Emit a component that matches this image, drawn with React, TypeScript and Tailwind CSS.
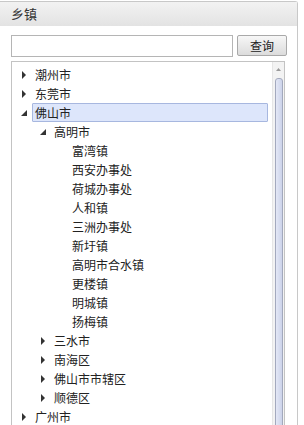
import React from 'react';

interface Node {
  label: string;
  level: number;
  state?: 'open' | 'closed';
  selected?: boolean;
}

const nodes: Node[] = [
  { label: '潮州市', level: 0, state: 'closed' },
  { label: '东莞市', level: 0, state: 'closed' },
  { label: '佛山市', level: 0, state: 'open', selected: true },
  { label: '高明市', level: 1, state: 'open' },
  { label: '富湾镇', level: 2 },
  { label: '西安办事处', level: 2 },
  { label: '荷城办事处', level: 2 },
  { label: '人和镇', level: 2 },
  { label: '三洲办事处', level: 2 },
  { label: '新圩镇', level: 2 },
  { label: '高明市合水镇', level: 2 },
  { label: '更楼镇', level: 2 },
  { label: '明城镇', level: 2 },
  { label: '扬梅镇', level: 2 },
  { label: '三水市', level: 1, state: 'closed' },
  { label: '南海区', level: 1, state: 'closed' },
  { label: '佛山市市辖区', level: 1, state: 'closed' },
  { label: '顺德区', level: 1, state: 'closed' },
  { label: '广州市', level: 0, state: 'closed' },
];

const indent = ['pl-[6px]', 'pl-[25px]', 'pl-[43px]'];

const Arrow: React.FC<{ state?: 'open' | 'closed' }> = ({ state }) => {
  if (state === 'closed')
    return (
      <svg width="5" height="8" viewBox="0 0 5 8" className="ml-[4px]">
        <path d="M0 0 L4 4 L0 8 Z" fill="#333" />
      </svg>
    );
  if (state === 'open')
    return (
      <svg width="6" height="6" viewBox="0 0 6 6" className="ml-[3px]">
        <path d="M6 0 L6 6 L0 6 Z" fill="#333" />
      </svg>
    );
  return null;
};

const App: React.FC = () => {
  return (
    <div className="w-[304px] h-[425px] overflow-hidden bg-white font-['Noto_Sans_CJK_SC',sans-serif] text-[12px] text-[#222]">
      <div className="w-[298px] h-[440px] border-r border-t border-[#c8c8c8] rounded-tr-[3px] mt-[1px]">
        <div className="h-[24px] bg-gradient-to-b from-[#f2f2f2] to-[#e3e3e3] flex items-center pl-[11px] text-[13px] text-[#333]">
          乡镇
        </div>

        <div className="pl-[11px] pr-[10px] pt-[9px]">
          <div className="flex gap-[4px] h-[22px]">
            <input className="w-[222px] h-[22px] border border-[#b5b5b5] bg-white outline-none px-1" />
            <button className="w-[50px] h-[21px] border border-[#a9a9a9] rounded-[2px] bg-gradient-to-b from-[#f7f7f7] to-[#dcdcdc] text-[12px] text-[#222] flex items-center justify-center">
              查询
            </button>
          </div>

          <div className="mt-[4px] w-[274px] h-[380px] border border-[#c3c3c3] flex">
            <div className="flex-1 pt-[3px]">
              {nodes.map((n) => (
                <div key={n.label} className={`h-[19px] flex items-center ${indent[n.level]}`}>
                  <div className="w-[14px] flex items-center">
                    <Arrow state={n.state} />
                  </div>
                  <div
                    className={`h-[19px] flex items-center px-[2px] border leading-none ${
                      n.selected
                        ? 'flex-1 mr-[4px] bg-[#dde6fb] border-[#a7b7df] rounded-[1px]'
                        : 'border-transparent'
                    }`}
                  >
                    {n.label}
                  </div>
                </div>
              ))}
            </div>

            <div className="w-[12px] bg-[#f3f3f3] border-l border-[#e6e6e6] flex flex-col items-center">
              <svg width="5" height="3" viewBox="0 0 5 3" className="mt-[6px]">
                <path d="M0 3 L2.5 0 L5 3 Z" fill="#9a9a9a" />
              </svg>
              <div className="mt-[7px] w-[8px] flex-1 rounded-[3px] border border-[#a3a9bd] bg-gradient-to-r from-[#e4e8f6] to-[#ccd3ea]" />
            </div>
          </div>
        </div>
      </div>
    </div>
  );
};

export default App;
